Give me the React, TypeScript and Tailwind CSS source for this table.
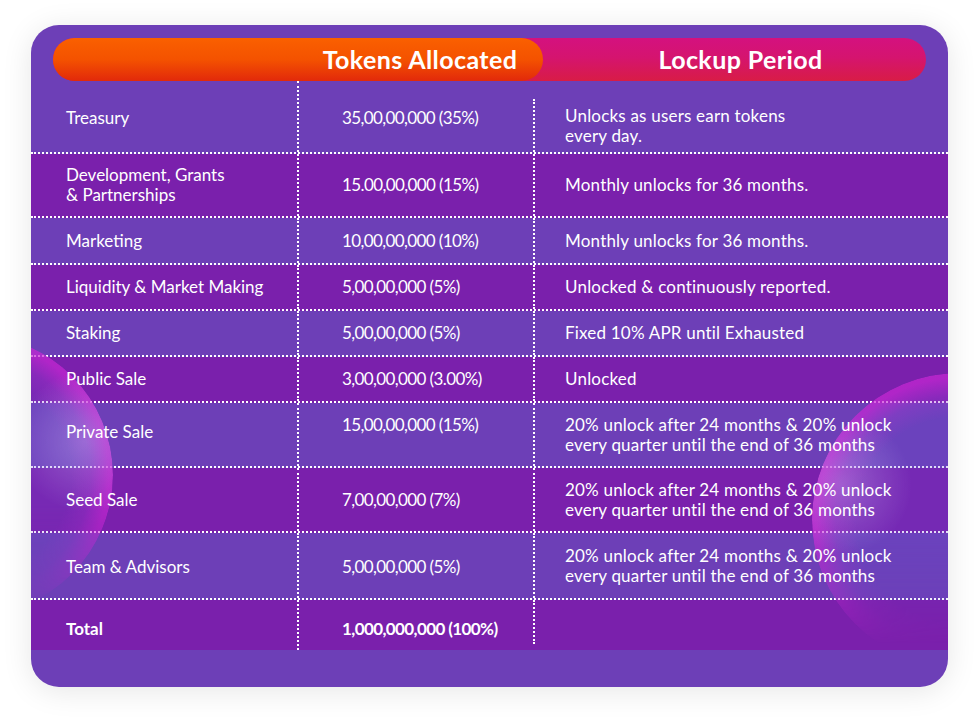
import React from "react";

type Row = {
  name: React.ReactNode;
  amount: string;
  lockup: React.ReactNode;
  h: string;
  dark: boolean;
  nameCls?: string;
  amountCls?: string;
  lockCls?: string;
};

const longLock = (
  <>
    20% unlock after 24 months &amp; 20% unlock
    <br />
    every quarter until the end of 36 months
  </>
);

const rows: Row[] = [
  {
    name: "Treasury",
    amount: "35,00,00,000 (35%)",
    lockup: (
      <>
        Unlocks as users earn tokens
        <br />
        every day.
      </>
    ),
    h: "h-[73px]",
    dark: false,
    nameCls: "pt-[3px]",
    amountCls: "pt-[3px]",
    lockCls: "mt-[18px]",
  },
  {
    name: (
      <>
        Development, Grants
        <br />& Partnerships
      </>
    ),
    amount: "15.00,00,000 (15%)",
    lockup: "Monthly unlocks for 36 months.",
    h: "h-[64px]",
    dark: true,
  },
  {
    name: "Marketing",
    amount: "10,00,00,000 (10%)",
    lockup: "Monthly unlocks for 36 months.",
    h: "h-[47px]",
    dark: false,
  },
  {
    name: "Liquidity & Market Making",
    amount: "5,00,00,000 (5%)",
    lockup: "Unlocked & continuously reported.",
    h: "h-[46px]",
    dark: true,
  },
  {
    name: "Staking",
    amount: "5,00,00,000 (5%)",
    lockup: "Fixed 10% APR until Exhausted",
    h: "h-[46px]",
    dark: false,
  },
  {
    name: "Public Sale",
    amount: "3,00,00,000 (3.00%)",
    lockup: "Unlocked",
    h: "h-[46px]",
    dark: true,
  },
  {
    name: "Private Sale",
    amount: "15,00,00,000 (15%)",
    lockup: longLock,
    h: "h-[65px]",
    dark: false,
    nameCls: "pb-[6px]",
    amountCls: "pb-[20px]",
  },
  {
    name: "Seed Sale",
    amount: "7,00,00,000 (7%)",
    lockup: longLock,
    h: "h-[65px]",
    dark: true,
  },
  {
    name: "Team & Advisors",
    amount: "5,00,00,000 (5%)",
    lockup: longLock,
    h: "h-[67px]",
    dark: false,
    nameCls: "pt-[2px]",
    amountCls: "pt-[2px]",
  },
];

export default function App() {
  return (
    <div
      className="w-[980px] h-[724px] bg-white pt-[25px] pl-[31px]"
      style={{ fontFamily: "Lato, 'Open Sans', sans-serif" }}
    >
      <div className="relative w-[917px] h-[662px] rounded-[28px] bg-[#6d3fb7] overflow-hidden shadow-[0_4px_30px_rgba(0,0,0,0.10)] flex flex-col">
        {/* header pill */}
        <div className="pt-[13px] px-[22px]">
          <div className="relative h-[43px] rounded-full bg-[linear-gradient(180deg,#d4117f_0%,#d5146f_45%,#d81c46_100%)]">
            <div className="absolute left-0 top-0 h-full w-[490px] rounded-full bg-[linear-gradient(180deg,#fa6000_0%,#f45200_50%,#e2290b_100%)]" />
            <div className="relative flex h-full items-center text-white font-bold text-[25px] tracking-[0.4px]">
              <div className="w-[250px]" />
              <div className="w-[234px] text-center">Tokens Allocated</div>
              <div className="flex-1 text-center pl-[18px]">Lockup Period</div>
            </div>
          </div>
        </div>

        {/* table */}
        <div className="relative overflow-hidden flex flex-col text-white text-[17px] leading-[20px]">
          {/* spheres */}
          <div className="pointer-events-none absolute left-[-198px] top-[254px] w-[280px] h-[280px] rounded-full z-[1] [mask-image:linear-gradient(to_bottom,black_0%,black_60%,transparent_96%)] bg-[radial-gradient(circle_70px_at_90%_38%,rgba(220,200,255,0.32)_0%,rgba(220,200,255,0)_100%),radial-gradient(circle_closest-side_at_50%_50%,rgba(110,80,215,0.2)_0%,rgba(110,80,215,0.2)_70%,rgba(160,60,215,0.35)_84%,rgba(200,40,212,0.7)_97%,rgba(200,40,212,0.7)_100%)]" />
          <div className="pointer-events-none absolute left-[781px] top-[292px] w-[294px] h-[294px] rounded-full z-[1] [mask-image:linear-gradient(to_bottom,black_0%,black_55%,transparent_92%)] bg-[radial-gradient(circle_70px_at_10%_38%,rgba(220,200,255,0.32)_0%,rgba(220,200,255,0)_100%),radial-gradient(circle_closest-side_at_50%_50%,rgba(100,80,215,0.2)_0%,rgba(100,80,215,0.2)_70%,rgba(160,60,215,0.35)_84%,rgba(200,40,212,0.7)_97%,rgba(200,40,212,0.7)_100%)]" />

          {rows.map((r, i) => (
            <div
              key={i}
              className={`flex ${r.h} border-b-2 border-dotted border-white ${
                r.dark ? "bg-[#7a20ac]" : "bg-[#6d3fb7]"
              }`}
            >
              <div
                className={`w-[268px] flex items-center pl-[35px] border-r-2 border-dotted border-white ${
                  r.nameCls ?? ""
                }`}
              >
                <span className="relative z-[2] whitespace-nowrap">{r.name}</span>
              </div>
              <div
                className={`w-[234px] flex items-center pl-[43px] tracking-[-0.6px] ${
                  r.amountCls ?? ""
                }`}
              >
                <span className="relative z-[2] whitespace-nowrap">{r.amount}</span>
              </div>
              <div
                className={`flex-1 flex items-center pl-[30px] tracking-[0.2px] border-l-2 border-dotted border-white ${
                  r.lockCls ?? ""
                }`}
              >
                <span className="relative z-[2] whitespace-nowrap">{r.lockup}</span>
              </div>
            </div>
          ))}
          {/* total row */}
          <div className="flex h-[50px] bg-[#7a20ac] font-bold">
            <div className="w-[268px] flex items-center pl-[35px] pt-[8px] border-r-2 border-dotted border-white">
              <span className="relative z-[2]">Total</span>
            </div>
            <div className="w-[234px] flex items-center pl-[43px] pt-[8px] tracking-[-0.6px]">
              <span className="relative z-[2] whitespace-nowrap">1,000,000,000 (100%)</span>
            </div>
            <div className="flex-1 mb-[6px] border-l-2 border-dotted border-white" />
          </div>
        </div>
      </div>
    </div>
  );
}
